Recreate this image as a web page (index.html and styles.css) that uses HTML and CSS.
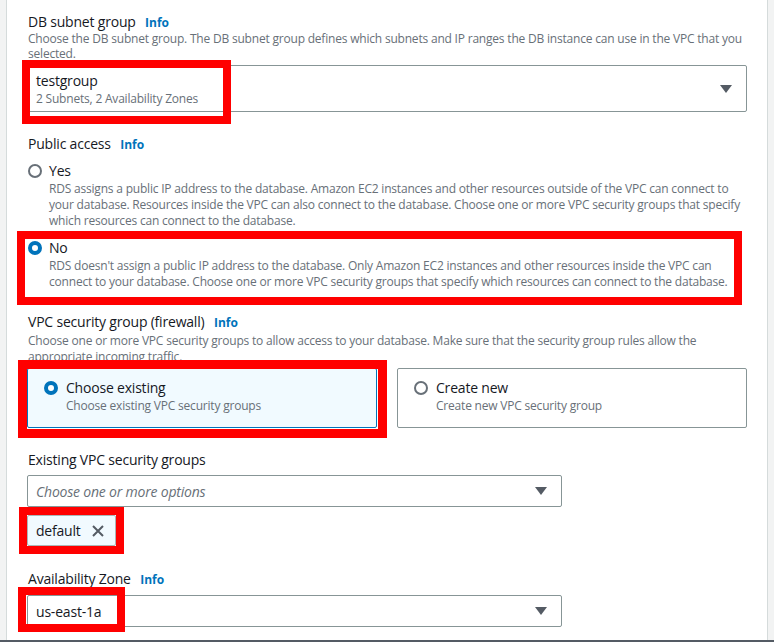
FILE: index.html
```html
<!DOCTYPE html>
<html>
<head>
    <title>Connectivity</title>
    <link rel="stylesheet" href="styles.css">
</head>
<body>
    <div class="frame">
        <div class="panel">
            <section class="field first">
                <div class="label">DB subnet group <a class="info">Info</a></div>
                <p class="desc tight">Choose the DB subnet group. The DB subnet group defines which subnets and IP ranges the DB instance can use in the VPC that you selected.</p>
                <div class="select tall">
                    <div>
                        <div class="value">testgroup</div>
                        <div class="sub">2 Subnets, 2 Availability Zones</div>
                    </div>
                    <span class="caret"></span>
                </div>
            </section>

            <section class="field">
                <div class="label">Public access <a class="info">Info</a></div>
                <div class="option">
                    <div class="option-head"><span class="radio"></span>Yes</div>
                    <p class="desc">RDS assigns a public IP address to the database. Amazon EC2 instances and other resources outside of the VPC can connect to your database. Resources inside the VPC can also connect to the database. Choose one or more VPC security groups that specify which resources can connect to the database.</p>
                </div>
                <div class="option second">
                    <div class="option-head"><span class="radio checked"></span>No</div>
                    <p class="desc">RDS doesn't assign a public IP address to the database. Only Amazon EC2 instances and other resources inside the VPC can connect to your database. Choose one or more VPC security groups that specify which resources can connect to the database.</p>
                </div>
            </section>

            <section class="field">
                <div class="label">VPC security group (firewall) <a class="info">Info</a></div>
                <p class="desc lower">Choose one or more VPC security groups to allow access to your database. Make sure that the security group rules allow the appropriate incoming traffic.</p>
                <div class="tiles">
                    <div class="tile active">
                        <span class="radio checked"></span>
                        <div>
                            <div class="tile-title">Choose existing</div>
                            <div class="tile-desc">Choose existing VPC security groups</div>
                        </div>
                    </div>
                    <div class="tile">
                        <span class="radio"></span>
                        <div>
                            <div class="tile-title">Create new</div>
                            <div class="tile-desc">Create new VPC security group</div>
                        </div>
                    </div>
                </div>
            </section>

            <section class="field">
                <div class="label">Existing VPC security groups</div>
                <div class="select short">
                    <span class="placeholder">Choose one or more options</span>
                    <span class="caret"></span>
                </div>
                <div class="tokens">
                    <div class="token">default
                        <svg width="14" height="14" viewBox="0 0 14 14"><path d="M2 2 L12 12 M12 2 L2 12" stroke="#545b64" stroke-width="2" fill="none"/></svg>
                    </div>
                </div>
            </section>

            <section class="field zone">
                <div class="label">Availability Zone <a class="info">Info</a></div>
                <div class="select short">
                    <span class="text">us-east-1a</span>
                    <span class="caret"></span>
                </div>
            </section>

            <!-- red highlight annotations drawn over the form -->
            <div class="mark mark-subnet"></div>
            <div class="mark mark-no"></div>
            <div class="mark mark-existing"></div>
            <div class="mark mark-token"></div>
            <div class="mark mark-zone"></div>
        </div>
    </div>
</body>
</html>
```

FILE: styles.css
```css
html, body {
    margin: 0;
    padding: 0;
}
body {
    background-color: #f2f3f3;
    font-family: "Open Sans", "Noto Sans", sans-serif;
    color: #16191f;
    letter-spacing: -0.2px;
    overflow: hidden;
}
.frame {
    width: 774px;
    height: 642px;
    box-sizing: border-box;
    padding: 0 6px 0 6px;
    border-bottom: 2px solid #545b64;
    background-color: #f2f3f3;
}
.panel {
    position: relative;
    height: 640px;
    box-sizing: border-box;
    padding: 14px 20px 0 21px;
    background-color: #fff;
    border-left: 1px solid #d5dbdb;
    border-right: 1px solid #d5dbdb;
    overflow: hidden;
}
.field {
    margin-top: 24px;
}
.field.first {
    margin-top: 0;
}
.field.zone {
    margin-top: 25px;
}
.label {
    font-size: 14px;
    line-height: 16px;
}
.info {
    margin-left: 6px;
    font-size: 12px;
    font-weight: bold;
    color: #0073bb;
    letter-spacing: 0;
}
.desc {
    margin: 0;
    font-size: 12px;
    line-height: 16px;
    color: #687078;
}
.desc.tight {
    line-height: 15px;
}
.desc.lower {
    margin-top: 2px;
}
.select {
    display: flex;
    align-items: center;
    justify-content: space-between;
    box-sizing: border-box;
    border: 1px solid #879596;
    border-radius: 2px;
    background-color: #fff;
    padding: 0 14px 0 7px;
}
.select.tall {
    margin-top: 4px;
    height: 47px;
    padding-top: 1px;
}
.select.short {
    margin-top: 7px;
    margin-left: -1px;
    width: 535px;
    height: 32px;
    padding-left: 8px;
}
.value {
    font-size: 14px;
    line-height: 20px;
}
.sub {
    font-size: 12px;
    line-height: 16px;
    color: #687078;
}
.caret {
    width: 0;
    height: 0;
    border-left: 6px solid transparent;
    border-right: 6px solid transparent;
    border-top: 8px solid #545b64;
}
.placeholder {
    font-size: 14px;
    font-style: italic;
    color: #687078;
}
.text {
    font-size: 14px;
}
.option {
    margin-top: 8px;
    padding-left: 21px;
}
.option.second {
    margin-top: 9px;
}
.option-head {
    display: flex;
    align-items: center;
    margin-left: -21px;
    font-size: 14px;
    line-height: 20px;
}
.radio {
    display: inline-block;
    flex: none;
    width: 14px;
    height: 14px;
    box-sizing: border-box;
    border: 2px solid #687078;
    border-radius: 50%;
    background-color: #fff;
    margin-right: 7px;
}
.radio.checked {
    border: 4px solid #0073bb;
}
.tiles {
    display: grid;
    grid-template-columns: 1fr 1fr;
    gap: 20px;
    margin-top: 3px;
    margin-left: -1px;
}
.tile {
    display: flex;
    align-items: flex-start;
    height: 60px;
    box-sizing: border-box;
    padding: 9px 16px 0 16px;
    border: 1px solid #879596;
    border-radius: 2px;
}
.tile.active {
    border-color: #0073bb;
    background-color: #f1faff;
}
.tile .radio {
    margin-top: 3px;
    margin-right: 8px;
}
.tile-title {
    font-size: 14px;
    line-height: 20px;
}
.tile-desc {
    font-size: 12px;
    line-height: 16px;
    color: #687078;
}
.tokens {
    margin-top: 8px;
    margin-left: -1px;
}
.token {
    display: inline-flex;
    align-items: center;
    gap: 10px;
    height: 31px;
    box-sizing: border-box;
    padding: 0 10px 0 8px;
    border: 1px solid #aab7b8;
    border-radius: 2px;
    background-color: #f1faff;
    font-size: 14px;
}
.mark {
    position: absolute;
    box-sizing: border-box;
    border: 8px solid #ff0000;
}
.mark-subnet {
    left: 15px;
    top: 60px;
    width: 209px;
    height: 64px;
}
.mark-no {
    left: 10px;
    top: 231px;
    width: 725px;
    height: 74px;
}
.mark-existing {
    left: 11px;
    top: 360px;
    width: 369px;
    height: 78px;
    border-width: 9px;
}
.mark-token {
    left: 12px;
    top: 507px;
    width: 105px;
    height: 47px;
}
.mark-zone {
    left: 11px;
    top: 587px;
    width: 107px;
    height: 45px;
}
```
